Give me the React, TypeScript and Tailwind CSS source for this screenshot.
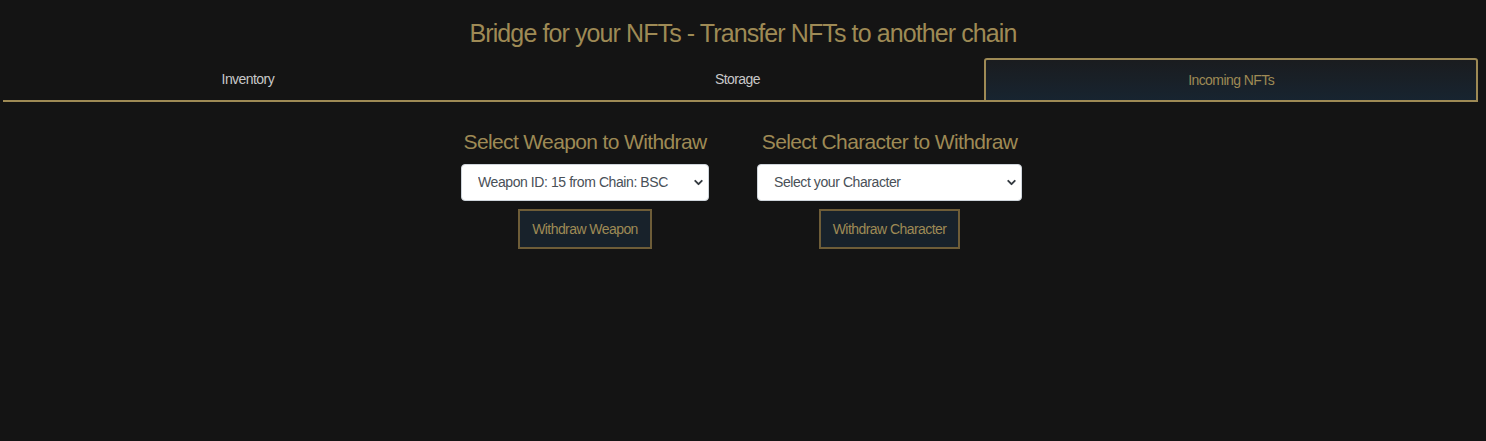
import { ChevronDown } from 'lucide-react';

const tabs = ['Inventory', 'Storage', 'Incoming NFTs'];
const activeTab = 'Incoming NFTs';

function WithdrawColumn({
  title,
  option,
  button,
  width,
}: {
  title: string;
  option: string;
  button: string;
  width: string;
}) {
  return (
    <div className={`flex flex-col items-center ${width}`}>
      <h2 className="whitespace-nowrap text-[21px] leading-[26px] tracking-[-0.03em] text-[#9e8a55]">
        {title}
      </h2>
      <div className="relative mt-[9px] w-full">
        <select className="h-[37px] w-full appearance-none rounded-[4px] border border-[#ced4da] bg-white pl-4 pr-6 text-[14px] tracking-[-0.03em] text-[#495057] outline-none">
          <option>{option}</option>
        </select>
        <ChevronDown
          className="pointer-events-none absolute right-[4px] top-[12px] h-[13px] w-[13px] text-[#343a40]"
          strokeWidth={3.5}
        />
      </div>
      <button
        type="button"
        className="mt-2 h-[40px] border-2 border-[#6e5d38] bg-[#18222b] px-3 text-[14px] tracking-[-0.04em] text-[#9e8a55]"
      >
        {button}
      </button>
    </div>
  );
}

export default function App() {
  return (
    <div className="min-h-[441px] bg-[#141414] px-[3px] pt-[18px] font-['Liberation_Sans',Arial,sans-serif]">
      <h1 className="text-center text-[25px] leading-[30px] tracking-[-0.036em] text-[#9e8a55]">
        Bridge for your NFTs - Transfer NFTs to another chain
      </h1>
      <div className="mt-[10px] flex w-[1475px] border-b-2 border-[#9e8a55]">
        {tabs.map((tab) =>
          tab === activeTab ? (
            <div
              key={tab}
              className="-mb-[2px] ml-[2px] flex h-[44px] flex-1 items-center justify-center rounded-t-[3px] border-2 border-[#9e8a55] bg-gradient-to-b from-[#1a1c1f] to-[#172430] text-[14px] tracking-[-0.04em] text-[#9e8a55]"
            >
              {tab}
            </div>
          ) : (
            <div
              key={tab}
              className="flex h-[42px] flex-1 items-center justify-center text-[14px] tracking-[-0.04em] text-[#c8c8c8]"
            >
              {tab}
            </div>
          ),
        )}
      </div>
      <div className="mt-[27px] flex justify-center gap-[48px] pr-[3px]">
        <WithdrawColumn
          title="Select Weapon to Withdraw"
          option="Weapon ID: 15 from Chain: BSC"
          button="Withdraw Weapon"
          width="w-[248px]"
        />
        <WithdrawColumn
          title="Select Character to Withdraw"
          option="Select your Character"
          button="Withdraw Character"
          width="w-[265px]"
        />
      </div>
    </div>
  );
}
